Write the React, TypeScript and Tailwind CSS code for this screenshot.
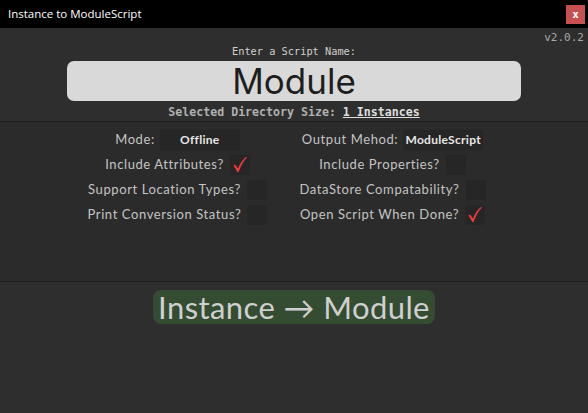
import React from "react";

const Check = () => (
  <svg width="16" height="17" viewBox="0 0 16 17" className="block">
    <path d="M1.5 9.5 L3 8.6 L6 12.5 C8 7.5 10.5 3.5 14.5 0.8 L15 1.4 C11.5 4.5 9 9.5 6.6 16 L5.6 16.2 Z" fill="#f03a3a" />
  </svg>
);

const Box = ({ checked }: { checked?: boolean }) => (
  <div className="w-[20px] h-[20px] rounded-[3px] bg-[#262626] flex items-center justify-center ml-[6px]">
    {checked ? <Check /> : null}
  </div>
);

const Row = ({ label, checked }: { label: string; checked?: boolean }) => (
  <div className="h-[25px] flex items-center justify-center">
    <span className="text-[13px] text-[#c4c4c4] tracking-[0.6px]" style={{ fontFamily: "Lato, sans-serif" }}>{label}</span>
    <Box checked={checked} />
  </div>
);

const Select = ({ label, value }: { label: string; value: string }) => (
  <div className="h-[25px] flex items-center justify-center">
    <span className="text-[13px] text-[#c4c4c4] tracking-[0.6px]" style={{ fontFamily: "Lato, sans-serif" }}>{label}</span>
    <div className="ml-[5px] w-[80px] h-[20px] rounded-[3px] bg-[#262626] flex items-center justify-center text-[12px] font-bold text-[#e6e6e6] tracking-[0.3px]" style={{ fontFamily: "Lato, sans-serif" }}>
      {value}
    </div>
  </div>
);

export default function App() {
  return (
    <div className="w-[588px] h-[413px] bg-[#2e2e2e] flex flex-col overflow-hidden">
      <div className="h-[28px] bg-black flex items-center justify-between pl-[8px] pr-[3px]">
        <span className="text-[11.5px] text-white" style={{ fontFamily: "'Open Sans', sans-serif" }}>Instance to ModuleScript</span>
        <div className="w-[19px] h-[19px] bg-[#c75050] flex items-center justify-center text-white text-[11px] font-bold leading-none" style={{ fontFamily: "'DejaVu Sans Mono', monospace" }}>x</div>
      </div>
      <div className="relative h-[94px] flex flex-col items-center pt-[16px] border-b border-[#1f1f1f]">
        <span className="absolute right-[4px] top-[2px] text-[11px] text-[#a8a8a8]" style={{ fontFamily: "'DejaVu Sans Mono', monospace" }}>v2.0.2</span>
        <span className="h-[14px] leading-[14px] text-[10.3px] text-[#cfcfcf]" style={{ fontFamily: "'DejaVu Sans Mono', monospace" }}>Enter a Script Name:</span>
        <div className="mt-[3px] w-[454px] h-[40px] rounded-[7px] bg-[#d9d9d9] flex items-center justify-center">
          <span className="text-[35px] text-[#1e1e1e] leading-none" style={{ fontFamily: "Inter, sans-serif" }}>Module</span>
        </div>
        <span className="mt-[4px] h-[14px] leading-[14px] text-[11.6px] font-bold text-[#b0b0b0]" style={{ fontFamily: "'DejaVu Sans Mono', monospace" }}>
          Selected Directory Size: <span className="underline text-[#dedede]">1 Instances</span>
        </span>
      </div>
      <div className="h-[160px] bg-[#2b2b2b] border-b border-[#1f1f1f] pt-[5px] pl-[70px]">
        <div className="grid grid-cols-[215px_215px]">
          <div className="flex flex-col">
            <Select label="Mode:" value="Offline" />
            <Row label="Include Attributes?" checked />
            <Row label="Support Location Types?" />
            <Row label="Print Conversion Status?" />
          </div>
          <div className="flex flex-col">
            <Select label="Output Mehod:" value="ModuleScript" />
            <Row label="Include Properties?" />
            <Row label="DataStore Compatability?" />
            <Row label="Open Script When Done?" checked />
          </div>
        </div>
      </div>
      <div className="flex justify-center pt-[8px]">
        <div className="h-[34px] px-[5px] rounded-[8px] bg-[#344c31] flex items-center">
          <span className="text-[31px] leading-none text-[#cfcfcf] tracking-[0.4px]" style={{ fontFamily: "Lato, sans-serif" }}>Instance → Module</span>
        </div>
      </div>
    </div>
  );
}
